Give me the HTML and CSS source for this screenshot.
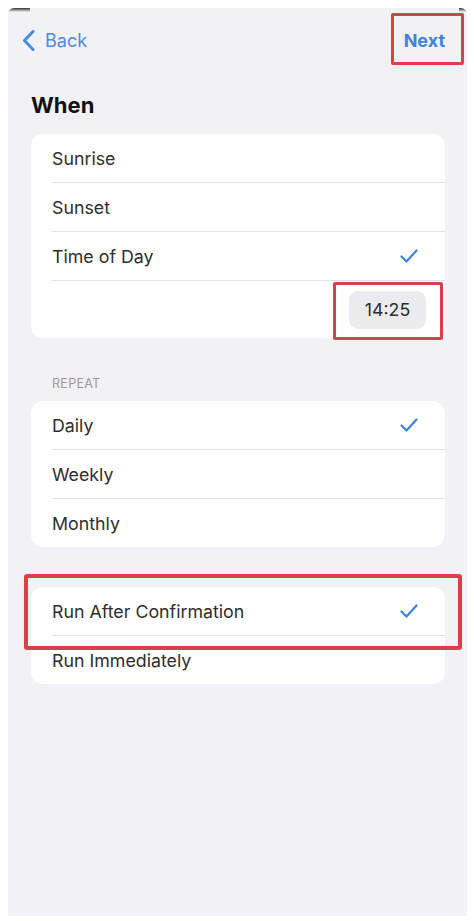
FILE: index.html
```html
<!DOCTYPE html>
<html lang="en">
<head>
    <meta charset="UTF-8">
    <meta name="viewport" content="width=device-width, initial-scale=1.0">
    <title>When</title>
    <link rel="stylesheet" href="styles.css">
</head>
<body>
    <div class="screen">
        <div class="nav">
            <div class="back">
                <svg width="13" height="21" viewBox="0 0 13 21"><path d="M11 1.5 L2.5 10.5 L11 19.5" fill="none" stroke="#4a8be3" stroke-width="3" stroke-linecap="round" stroke-linejoin="round"/></svg>
                <span>Back</span>
            </div>
            <div class="next">Next</div>
        </div>

        <h1>When</h1>

        <div class="card">
            <div class="row"><div class="row-inner">Sunrise</div></div>
            <div class="row"><div class="row-inner">Sunset</div></div>
            <div class="row"><div class="row-inner">Time of Day <span class="check"></span></div></div>
            <div class="time-row"><span class="pill">14:25</span></div>
        </div>

        <p class="section-label">REPEAT</p>

        <div class="card">
            <div class="row"><div class="row-inner">Daily <span class="check"></span></div></div>
            <div class="row"><div class="row-inner">Weekly</div></div>
            <div class="row"><div class="row-inner last">Monthly</div></div>
        </div>

        <div class="card run-card">
            <div class="row"><div class="row-inner">Run After Confirmation <span class="check"></span></div></div>
            <div class="row"><div class="row-inner last">Run Immediately</div></div>
        </div>

        <!-- red annotation boxes -->
        <div class="mark mark-next"></div>
        <div class="mark mark-time"></div>
        <div class="mark mark-run"></div>
    </div>
</body>
</html>
```

FILE: styles.css
```css
body {
    margin: 0;
    background-color: #ffffff;
    font-family: Inter, "Liberation Sans", Arial, sans-serif;
}

.screen {
    position: relative;
    margin: 8px 7px 0 8px;
    height: 908px;
    background-color: #f1f1f6;
    border-top-left-radius: 6px;
    border-top-right-radius: 6px;
    overflow: hidden;
}

.screen::before,
.screen::after {
    content: "";
    position: absolute;
    top: 0;
    width: 22px;
    height: 4px;
    background: linear-gradient(#333, rgba(51, 51, 51, 0));
}

.screen::before {
    left: 0;
}

.screen::after {
    right: 0;
    width: 8px;
}

.nav {
    height: 64px;
    display: flex;
    align-items: center;
    justify-content: space-between;
    padding: 0 22px 0 14px;
}

.back {
    display: flex;
    align-items: center;
    gap: 10px;
    color: #4a8be3;
    font-size: 18px;
}

.back svg {
    display: block;
}

.next {
    color: #3f82e0;
    font-size: 18px;
    font-weight: 700;
}

h1 {
    margin: 20px 0 16px 23px;
    font-size: 22px;
    line-height: 26px;
    font-weight: 700;
    color: #111;
}

.card {
    margin: 0 22px 0 23px;
    background-color: #ffffff;
    border-radius: 12px;
    overflow: hidden;
}

.row {
    padding-left: 21px;
}

.row-inner {
    height: 48px;
    display: flex;
    align-items: center;
    justify-content: space-between;
    padding-right: 27px;
    border-bottom: 1px solid #e2e2e6;
    font-size: 17.8px;
    color: #2e2e2e;
}

.row-inner.last {
    border-bottom: none;
}

.check {
    width: 18px;
    height: 14px;
    background: url("data:image/svg+xml,%3Csvg xmlns='http://www.w3.org/2000/svg' width='18' height='14' viewBox='0 0 18 14'%3E%3Cpath d='M1.5 7.5 L6.5 12.5 L16.5 1.5' fill='none' stroke='%233f82e0' stroke-width='2.2' stroke-linecap='round' stroke-linejoin='round'/%3E%3C/svg%3E") no-repeat center;
}

.time-row {
    height: 57px;
    display: flex;
    align-items: center;
    justify-content: flex-end;
    padding-right: 19px;
}

.pill {
    width: 77px;
    height: 38px;
    display: flex;
    align-items: center;
    justify-content: center;
    background-color: #ececf0;
    border-radius: 9px;
    font-size: 17.8px;
    color: #2e2e2e;
}

.section-label {
    margin: 38px 0 9px 44px;
    font-size: 12.5px;
    line-height: 16px;
    color: #9a9a9f;
    letter-spacing: 0.3px;
}

.run-card {
    margin-top: 40px;
}

.mark {
    position: absolute;
    border: 3px solid #d8404c;
    border-radius: 2px;
    box-sizing: border-box;
}

.mark-next {
    left: 383px;
    top: 5px;
    width: 73px;
    height: 52px;
}

.mark-time {
    left: 325px;
    top: 274px;
    width: 110px;
    height: 58px;
}

.mark-run {
    left: 16px;
    top: 566px;
    width: 438px;
    height: 76px;
    border-width: 4px;
    border-radius: 3px;
}
```
